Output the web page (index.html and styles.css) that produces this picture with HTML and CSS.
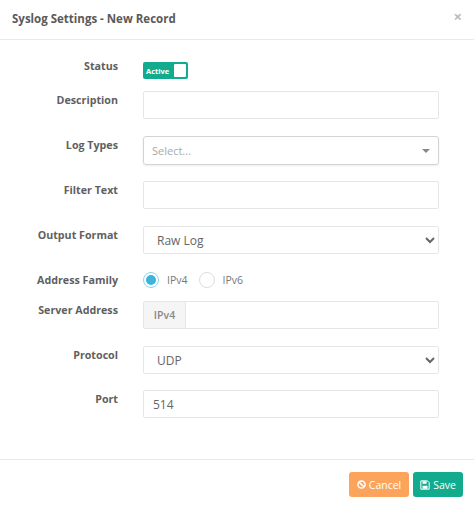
FILE: index.html
```html
<!DOCTYPE html>
<html lang="en">

<head>
    <meta charset="UTF-8">
    <title>Syslog Settings</title>
    <link rel="stylesheet" href="styles.css">
</head>

<body>
    <div class="modal">
        <div class="modal_head">
            <h4>Syslog Settings - New Record</h4>
            <span class="close">&times;</span>
        </div>
        <div class="modal_body">
            <div class="row row_toggle">
                <label>Status</label>
                <div class="toggle">
                    <span class="toggle_text">Active</span>
                    <span class="toggle_knob"></span>
                </div>
            </div>
            <div class="row">
                <label>Description</label>
                <input class="field" type="text">
            </div>
            <div class="row row_chosen">
                <label>Log Types</label>
                <div class="chosen">
                    <span>Select...</span>
                    <i class="caret"></i>
                </div>
            </div>
            <div class="row">
                <label>Filter Text</label>
                <input class="field" type="text">
            </div>
            <div class="row">
                <label>Output Format</label>
                <select class="field">
                    <option>Raw Log</option>
                </select>
            </div>
            <div class="row row_radio">
                <label>Address Family</label>
                <div class="radios">
                    <span class="radio checked"></span>
                    <span class="radio_text">IPv4</span>
                    <span class="radio"></span>
                    <span class="radio_text">IPv6</span>
                </div>
            </div>
            <div class="row">
                <label>Server Address</label>
                <div class="group">
                    <span class="addon">IPv4</span>
                    <input type="text">
                </div>
            </div>
            <div class="row row_protocol">
                <label>Protocol</label>
                <select class="field">
                    <option>UDP</option>
                </select>
            </div>
            <div class="row">
                <label>Port</label>
                <input class="field" type="text" value="514">
            </div>
        </div>
        <div class="modal_foot">
            <button class="btn cancel">
                <svg viewBox="0 0 12 12" width="9" height="9"><circle cx="6" cy="6" r="4.8" fill="none" stroke="#fff" stroke-width="2"/><path d="M2.8 2.8l6.4 6.4" stroke="#fff" stroke-width="2"/></svg>
                Cancel
            </button>
            <button class="btn save">
                <svg viewBox="0 0 12 12" width="10" height="10"><path d="M1 1h8l2 2v8H1z" fill="none" stroke="#fff" stroke-width="1.2"/><path d="M3 1.5h5v3H3zM3 7h6v3.5H3z" fill="#fff"/></svg>
                Save
            </button>
        </div>
    </div>
</body>

</html>
```

FILE: styles.css
```css
html,
body {
    width: 100%;
    height: 100%;
    margin: 0;
    padding: 0;
    background: #fff;
}

body {
    font-family: "Open Sans", "Noto Sans", sans-serif;
    font-size: 11px;
    color: #666;
}

.modal {
    width: 474px;
}

.modal_head {
    height: 39px;
    padding: 0 12px;
    display: flex;
    justify-content: space-between;
    align-items: center;
    border-bottom: 1px solid #e9e9e9;
}

.modal_head h4 {
    margin: 0 0 2px;
    font-size: 11.5px;
    font-weight: 700;
    color: #5a5a5a;
}

.close {
    font-size: 15px;
    font-weight: 700;
    line-height: 1;
    color: #bbb;
    margin-top: -6px;
}

.modal_body {
    padding-top: 22px;
    height: 419px;
    box-sizing: border-box;
}

.row {
    display: grid;
    grid-template-columns: 118px 296px;
    column-gap: 25px;
    margin-bottom: 17px;
}

.row label {
    text-align: right;
    font-weight: 700;
    font-size: 10.7px;
    line-height: 15px;
    padding-top: 2px;
    color: #5f5f5f;
}

.row_toggle {
    margin-bottom: 12px;
}

.row_toggle label {
    padding-top: 0;
    margin-top: -3px;
}

.row_chosen,
.row_protocol {
    margin-bottom: 16px;
}

.row_radio {
    margin-bottom: 13px;
}

.toggle {
    width: 45px;
    height: 17px;
    box-sizing: border-box;
    background: #12ab8d;
    border-radius: 2px;
    padding: 2px;
    display: flex;
    justify-content: space-between;
    align-items: center;
}

.toggle_text {
    font-size: 7.5px;
    font-weight: 700;
    color: #fff;
    padding-left: 1px;
}

.toggle_knob {
    width: 12px;
    height: 13px;
    background: #fff;
    border-radius: 1px;
}

.field {
    width: 296px;
    height: 28px;
    box-sizing: border-box;
    border: 1px solid #e6e6e6;
    border-radius: 2px;
    background: #fff;
    padding: 0 9px;
    font-family: inherit;
    font-size: 12px;
    color: #666;
    outline: none;
}

.chosen {
    width: 296px;
    height: 29px;
    box-sizing: border-box;
    border: 1px solid #d4d4d4;
    border-radius: 3px;
    box-shadow: 0 1px 2px rgba(0, 0, 0, .08);
    padding: 0 8px;
    display: flex;
    justify-content: space-between;
    align-items: center;
    color: #aaa;
    font-size: 11px;
}

.caret {
    width: 0;
    height: 0;
    border-left: 4px solid transparent;
    border-right: 4px solid transparent;
    border-top: 4px solid #888;
}

.radios {
    display: flex;
    align-items: center;
    height: 17px;
}

.radio {
    width: 14px;
    height: 14px;
    border: 1px solid #ddd;
    border-radius: 50%;
    background: #fff;
    position: relative;
}

.radio.checked {
    border-color: #8fd3ea;
}

.radio.checked::after {
    content: "";
    position: absolute;
    left: 2px;
    top: 2px;
    width: 10px;
    height: 10px;
    border-radius: 50%;
    background: #3cb4dc;
}

.radio_text {
    font-size: 10.5px;
    color: #777;
    margin: 0 11px 0 8px;
}

.group {
    width: 296px;
    height: 28px;
    box-sizing: border-box;
    display: flex;
    border: 1px solid #e6e6e6;
    border-radius: 2px;
}

.addon {
    width: 42px;
    box-sizing: border-box;
    background: #f5f5f5;
    border-right: 1px solid #e6e6e6;
    text-align: center;
    font-size: 10.5px;
    font-weight: 600;
    line-height: 26px;
    color: #888;
}

.group input {
    flex: 1;
    min-width: 0;
    border: 0;
    outline: none;
}

.modal_foot {
    border-top: 1px solid #e9e9e9;
    padding: 12px 11px 0 0;
    display: flex;
    justify-content: flex-end;
    gap: 4px;
}

.btn {
    height: 25px;
    border: 0;
    border-radius: 3px;
    color: #fff;
    font-family: inherit;
    font-size: 10.5px;
    display: flex;
    align-items: center;
    justify-content: center;
    gap: 3px;
    padding: 0;
}

.cancel {
    width: 60px;
    background: #fda45c;
}

.save {
    width: 50px;
    background: #12ab8d;
}
```
